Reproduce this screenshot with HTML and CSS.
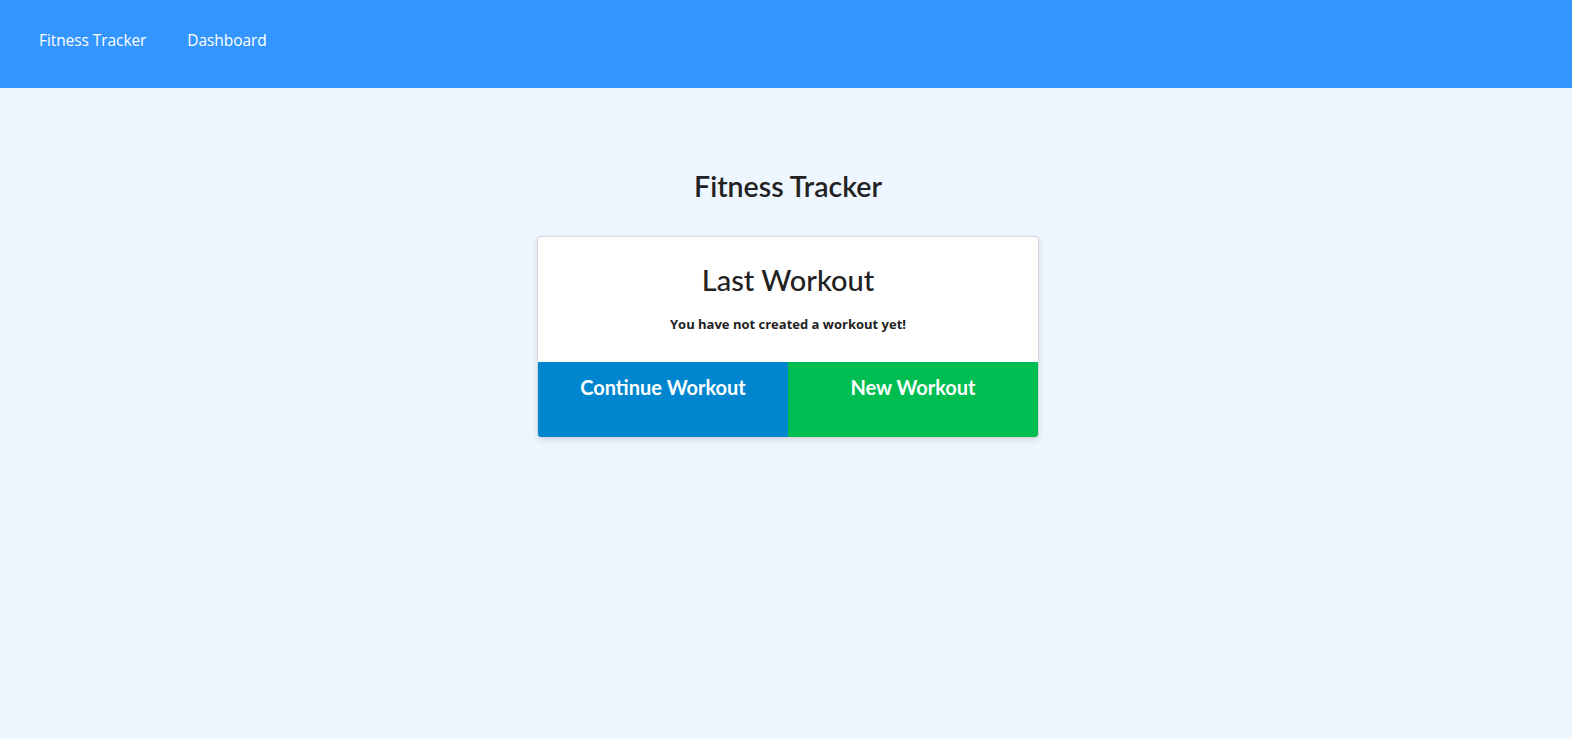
FILE: index.html
```html
<!DOCTYPE html>
<html lang="en">
<head>
<meta charset="utf-8">
<title>Fitness Tracker</title>
<link rel="stylesheet" href="styles.css">
</head>
<body>
  <nav class="topbar">
    <a class="nav-link" href="#">Fitness Tracker</a>
    <a class="nav-link" href="#">Dashboard</a>
  </nav>
  <main class="page">
    <h1 class="page-title">Fitness Tracker</h1>
    <section class="card">
      <div class="card-body">
        <h2 class="card-title">Last Workout</h2>
        <p class="card-note">You have not created a workout yet!</p>
      </div>
      <div class="card-actions">
        <a class="action action-continue" href="#">Continue Workout</a>
        <a class="action action-new" href="#">New Workout</a>
      </div>
    </section>
  </main>
</body>
</html>
```

FILE: styles.css
```css
* { box-sizing: border-box; }

html, body {
  margin: 0;
  height: 100%;
}

body {
  background: #eef6ff;
  font-family: "Open Sans", "Noto Sans", sans-serif;
  color: #222;
}

.topbar {
  height: 88px;
  background: #3395ff;
  display: flex;
  align-items: center;
  gap: 41px;
  padding: 0 39px 8px;
}

.nav-link {
  color: #fff;
  text-decoration: none;
  font-size: 15.5px;
  letter-spacing: -0.08px;
}

.page {
  display: flex;
  flex-direction: column;
  align-items: center;
  padding-top: 80px;
  padding-left: 4px;
}

.page-title {
  margin: 0 0 32px;
  font-family: "Lato", sans-serif;
  font-weight: 600;
  font-size: 28.5px;
  line-height: 36px;
  color: #222;
}

.card {
  width: 502px;
  background: #fff;
  border: 1px solid #d6d9de;
  border-radius: 4px;
  box-shadow: 0 2px 6px rgba(0, 0, 0, 0.12);
  overflow: hidden;
}

.card-body {
  padding: 26px 20px 29px;
  text-align: center;
}

.card-title {
  margin: 0;
  font-family: "Lato", sans-serif;
  font-weight: 500;
  font-size: 29px;
  line-height: 34px;
  color: #222;
}

.card-note {
  margin: 18px 0 0;
  font-size: 13px;
  font-weight: 700;
  line-height: 18px;
  color: #222;
}

.card-actions {
  display: grid;
  grid-template-columns: 1fr 1fr;
  height: 75px;
}

.action {
  display: block;
  padding-top: 12px;
  text-align: center;
  color: #fff;
  text-decoration: none;
  font-family: "Lato", sans-serif;
  font-weight: 700;
  font-size: 20px;
  line-height: 26px;
}

.action-continue { background: #0086cf; }
.action-new { background: #00bd52; }
```
